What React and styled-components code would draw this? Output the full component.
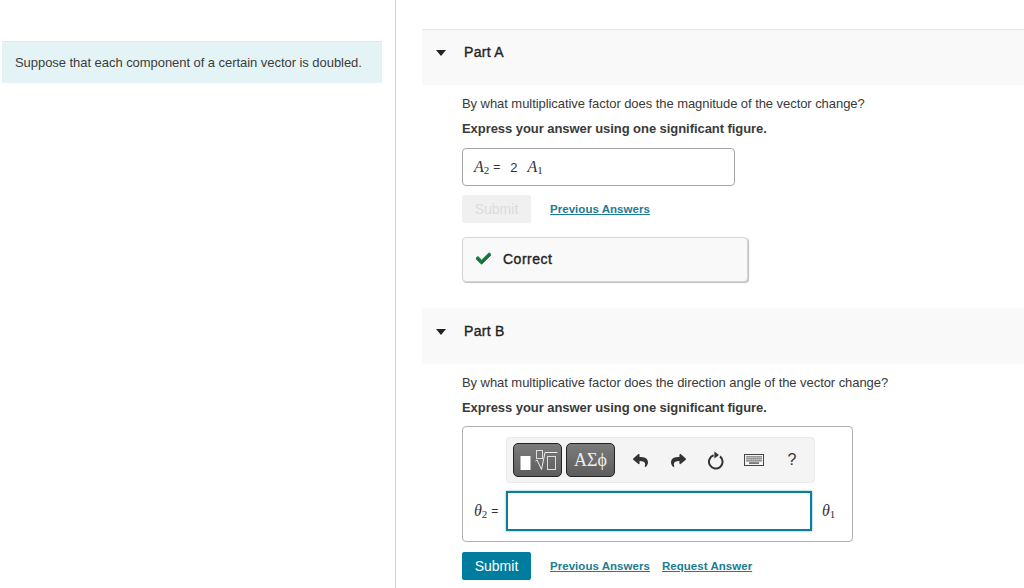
import React from 'react';
import styled, { createGlobalStyle } from 'styled-components';
import { FaReply, FaShare, FaCheck } from 'react-icons/fa';

const Global = createGlobalStyle`
  html, body { margin: 0; padding: 0; background: #fff; }
  body { font-family: "Liberation Sans", Arial, sans-serif; color: #333; overflow: hidden; }
`;

function RootIcon() {
  return (
    <svg width="46" height="30" viewBox="0 0 46 30" fill="none">
      <rect x="5.5" y="11" width="10" height="14" fill="#fff" />
      <rect x="21.5" y="5.5" width="6" height="8" stroke="#ddd" strokeWidth="1" />
      <path d="M20.5 16l1.6-1 4.4 9.5L30 7.5h12.5" stroke="#eee" strokeWidth="1" />
      <rect x="32.5" y="11.5" width="8" height="13" stroke="#ddd" strokeWidth="1" />
    </svg>
  );
}

function RedoCircle() {
  return (
    <svg width="18" height="20" viewBox="0 0 18 20" fill="none">
      <path d="M13 6.4A6.8 6.8 0 1 1 6.6 5.3" stroke="#333" strokeWidth="2" />
      <path d="M7.4 1.5l0 7 4.6-3.6z" fill="#333" />
    </svg>
  );
}

function KeyboardIcon() {
  const keys = [];
  for (let r = 0; r < 3; r++) {
    for (let c = 0; c < 8; c++) {
      keys.push(<rect key={r + '-' + c} x={2.4 + c * 2} y={2.2 + r * 2} width="1.3" height="1.3" fill="#444" />);
    }
  }
  return (
    <svg width="20" height="12" viewBox="0 0 20 12" fill="none">
      <rect x="0.5" y="0.5" width="19" height="11" fill="#f4f4f4" stroke="#444" />
      {keys}
      <rect x="5" y="8.4" width="10" height="1.3" fill="#444" />
    </svg>
  );
}

function Part({ title, question, first, children }) {
  return (
    <section>
      <PartHeader $first={first}>
        <Caret />
        <PartTitle>{title}</PartTitle>
      </PartHeader>
      <PartBody>
        <Question>{question}</Question>
        <Instruction>Express your answer using one significant figure.</Instruction>
        {children}
      </PartBody>
    </section>
  );
}

export default function App() {
  return (
    <>
      <Global />
      <Page>
        <Aside>
          <Intro>Suppose that each component of a certain vector is doubled.</Intro>
        </Aside>
        <Main>
          <Part first title="Part A" question="By what multiplicative factor does the magnitude of the vector change?">
            <AnswerBox>
              <MathVar>A<sub>2</sub></MathVar>
              <Equals>=</Equals>
              <Value>2</Value>
              <MathVar>A<sub>1</sub></MathVar>
            </AnswerBox>
            <Actions>
              <SubmitButton disabled>Submit</SubmitButton>
              <ActionLink href="#">Previous Answers</ActionLink>
            </Actions>
            <Feedback>
              <CheckMark><FaCheck size={15} /></CheckMark>
              Correct
            </Feedback>
          </Part>
          <Part title="Part B" question="By what multiplicative factor does the direction angle of the vector change?">
            <EditorBox>
              <Toolbar>
                <DarkButton><RootIcon /></DarkButton>
                <DarkButton>ΑΣϕ</DarkButton>
                <ToolIcons>
                  <ToolIcon><FaReply size={15} /></ToolIcon>
                  <ToolIcon><FaShare size={15} /></ToolIcon>
                  <ToolIcon><RedoCircle /></ToolIcon>
                  <ToolIcon><KeyboardIcon /></ToolIcon>
                  <ToolIcon $help>?</ToolIcon>
                </ToolIcons>
              </Toolbar>
              <EditorRow>
                <EditorLabel>
                  <MathVar>θ<sub>2</sub></MathVar>
                  <Equals>=</Equals>
                </EditorLabel>
                <EditorInput />
                <MathVar>θ<sub>1</sub></MathVar>
              </EditorRow>
            </EditorBox>
            <Actions $last>
              <SubmitButton>Submit</SubmitButton>
              <ActionLink href="#">Previous Answers</ActionLink>
              <ActionLink href="#">Request Answer</ActionLink>
            </Actions>
          </Part>
        </Main>
      </Page>
    </>
  );
}

const Page = styled.div`
  display: flex;
  width: 1024px;
  height: 588px;
  overflow: hidden;
`;

const Aside = styled.aside`
  width: 395px;
  box-sizing: border-box;
  flex: none;
  padding: 41px 13px 0 2px;
`;

const Intro = styled.div`
  height: 42px;
  box-sizing: border-box;
  padding-left: 13px;
  display: flex;
  align-items: center;
  background: #e4f4f6;
  border-top: 1px solid #dcebec;
  font-size: 13px;
  letter-spacing: -0.05px;
  color: #3c3c3c;
`;

const Main = styled.main`
  flex: 1;
  border-left: 1px solid #c5d3da;
  padding: 29px 0 0 26px;
  display: flex;
  flex-direction: column;
  gap: 26px;
`;

const PartHeader = styled.div`
  height: 56px;
  box-sizing: border-box;
  border-top: 1px solid ${p => (p.$first ? '#e6e6e6' : '#f9f9f9')};
  background: #f9f9f9;
  display: flex;
  align-items: flex-start;
  padding: 14px 0 0 13px;
`;

const Caret = styled.span`
  width: 0;
  height: 0;
  margin: 6px 0 0 1px;
  border-left: 5.5px solid transparent;
  border-right: 5.5px solid transparent;
  border-top: 6px solid #222;
`;

const PartTitle = styled.h2`
  margin: 0 0 0 18px;
  font-size: 14px;
  line-height: 16px;
  font-weight: 400;
  letter-spacing: 0.3px;
  -webkit-text-stroke: 0.35px #222;
  color: #222;
`;

const PartBody = styled.div`
  padding: 11px 0 0 40px;
`;

const Question = styled.p`
  margin: 0;
  font-size: 13px;
  line-height: 16px;
  letter-spacing: -0.06px;
  color: #3a3a3a;
`;

const Instruction = styled.p`
  margin: 9px 0 0;
  font-size: 13px;
  line-height: 16px;
  font-weight: 700;
  letter-spacing: -0.06px;
  color: #3a3a3a;
`;

const AnswerBox = styled.div`
  width: 273px;
  height: 38px;
  margin-top: 11px;
  box-sizing: border-box;
  border: 1px solid #a5a5a5;
  border-radius: 4px;
  padding-left: 11px;
  display: flex;
  align-items: center;
`;

const MathVar = styled.span`
  font-family: "Liberation Serif", "Times New Roman", serif;
  font-style: italic;
  font-size: 16px;
  color: #333;

  sub {
    font-style: normal;
    font-size: 11px;
    line-height: 0;
    vertical-align: -2px;
  }
`;

const Equals = styled.span`
  font-size: 12px;
  margin-left: 4px;
`;

const Value = styled.span`
  font-size: 13px;
  margin: 0 10px 0 10px;
`;

const Actions = styled.div`
  display: flex;
  align-items: center;
  gap: 12px;
  margin-top: ${p => (p.$last ? '10px' : '9px')};
`;

const SubmitButton = styled.button`
  width: 69px;
  height: 28px;
  margin-right: 7px;
  border: 0;
  border-radius: 2px;
  padding: 0;
  font-family: inherit;
  font-size: 14px;
  background: ${p => (p.disabled ? '#f0f0f0' : '#007c9e')};
  color: ${p => (p.disabled ? '#dcdcdc' : '#fff')};
`;

const ActionLink = styled.a`
  font-size: 11.5px;
  font-weight: 700;
  letter-spacing: 0.04px;
  color: #1b7c94;
  text-decoration: underline;
`;

const Feedback = styled.div`
  width: 286px;
  height: 45px;
  margin-top: 14px;
  padding: 0 0 2px 13px;
  box-sizing: border-box;
  border: 1px solid #d4d4d4;
  border-radius: 4px;
  box-shadow: 1px 1px 1px #bdbdbd;
  background: #f9f9f9;
  display: flex;
  align-items: center;
  font-size: 14px;
  font-weight: 400;
  letter-spacing: 0.5px;
  -webkit-text-stroke: 0.35px #222;
  color: #222;
`;

const CheckMark = styled.span`
  display: flex;
  color: #11763c;
  margin-right: 12px;

  svg {
    stroke: #11763c;
    stroke-width: 30;
  }
`;

const EditorBox = styled.div`
  width: 391px;
  height: 116px;
  margin-top: 10px;
  box-sizing: border-box;
  border: 1px solid #b0b0b0;
  border-radius: 4px;
  padding: 10px 0 0 11px;
`;

const Toolbar = styled.div`
  width: 309px;
  height: 46px;
  box-sizing: border-box;
  margin-left: 32px;
  padding: 5px 0 0 6px;
  background: #f4f4f4;
  border: 1px solid #eaeaea;
  border-radius: 4px;
  display: flex;
  align-items: flex-start;
  gap: 4px;
`;

const DarkButton = styled.div`
  width: 49px;
  height: 34px;
  box-sizing: border-box;
  border: 1px solid #222;
  border-radius: 5px;
  background: linear-gradient(#7b7b7b, #5d5d5d);
  color: #eee;
  display: flex;
  align-items: center;
  justify-content: center;
  font-family: "Liberation Serif", "Times New Roman", serif;
  font-size: 18px;
`;

const ToolIcons = styled.div`
  display: flex;
  height: 34px;
  margin-left: 2px;
  align-items: center;
`;

const ToolIcon = styled.span`
  width: 38px;
  display: flex;
  justify-content: center;
  align-items: center;
  color: #333;
  font-family: "Liberation Sans", Arial, sans-serif;
  font-size: ${p => (p.$help ? '16px' : '14px')};
`;

const EditorRow = styled.div`
  display: flex;
  align-items: center;
  margin-top: 8px;
`;

const EditorLabel = styled.div`
  width: 32px;
  display: flex;
  align-items: center;
`;

const EditorInput = styled.div`
  width: 306px;
  height: 40px;
  margin-right: 10px;
  box-sizing: border-box;
  border: 2px solid #0f7c9c;
  box-shadow: 0 0 2px #5fa9bf;
  background: #fff;
`;
